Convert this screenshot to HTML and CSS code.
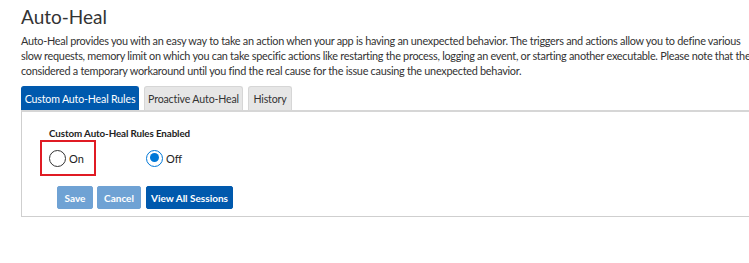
FILE: index.html
```html
<!DOCTYPE html>
<html>
<head>
<meta charset="utf-8">
<link rel="stylesheet" href="styles.css">
</head>
<body>
<div class="page">
  <h1 class="title">Auto-Heal</h1>
  <p class="desc">
    <span class="line">Auto-Heal provides you with an easy way to take an action when your app is having an unexpected behavior. The triggers and actions allow you to define various</span>
    <span class="line">slow requests, memory limit on which you can take specific actions like restarting the process, logging an event, or starting another executable. Please note that the</span>
    <span class="line">considered a temporary workaround until you find the real cause for the issue causing the unexpected behavior.</span>
  </p>
  <div class="tabs">
    <div class="tab active tab-custom">Custom Auto-Heal Rules</div>
    <div class="tab tab-proactive">Proactive Auto-Heal</div>
    <div class="tab tab-history">History</div>
  </div>
  <div class="panel">
    <div class="label">Custom Auto-Heal Rules Enabled</div>
    <div class="radios">
      <div class="radio highlight"><span class="circle"></span><span>On</span></div>
      <div class="radio"><span class="circle checked"></span><span>Off</span></div>
    </div>
    <div class="buttons">
      <button class="btn disabled btn-save">Save</button>
      <button class="btn disabled btn-cancel">Cancel</button>
      <button class="btn primary btn-sessions">View All Sessions</button>
    </div>
  </div>
</div>
</body>
</html>
```
FILE: styles.css
```css
html, body {
  margin: 0;
  padding: 0;
  background: #fff;
  overflow: hidden;
}
body {
  width: 749px;
  height: 263px;
  font-family: Lato, "Open Sans", sans-serif;
  color: #333;
}
.page {
  padding-left: 21px;
}
.title {
  margin: 0;
  padding-top: 4px;
  font-size: 19px;
  font-weight: 400;
  line-height: 26px;
  color: #333;
}
.desc {
  margin: 3px 0 0 0;
  font-size: 10.9px;
  letter-spacing: -0.28px;
  line-height: 15px;
  color: #333;
}
.line {
  display: block;
  white-space: nowrap;
}
.tabs {
  display: flex;
  gap: 5px;
  margin-top: 8px;
  height: 24px;
}
.tab {
  box-sizing: border-box;
  height: 24px;
  text-align: center;
  font-size: 10.6px;
  letter-spacing: -0.15px;
  line-height: 24px;
  background: #e6e6e6;
  border: 1px solid #d6d6d6;
  border-bottom: none;
  border-radius: 3px 3px 0 0;
  color: #333;
}
.tab-custom { width: 118px; }
.tab-proactive { width: 99px; }
.tab-history { width: 44px; }
.tab.active {
  background: #0059ad;
  border-color: #0059ad;
  color: #fff;
}
.panel {
  box-sizing: border-box;
  width: 800px;
  height: 107px;
  border: 1px solid #cfcfcf;
  border-top: 2px solid #d6d6d6;
  padding: 14px 0 0 27px;
}
.label {
  font-size: 9.8px;
  letter-spacing: -0.1px;
  font-weight: 700;
  line-height: 14px;
  color: #222;
}
.radios {
  display: flex;
  margin-left: -9px;
}
.radio {
  box-sizing: border-box;
  display: flex;
  align-items: center;
  gap: 3px;
  height: 36px;
  width: 56px;
  padding-left: 7px;
  font-size: 11px;
  color: #222;
  border: 2px solid transparent;
}
.radio.highlight {
  border-color: #e01b24;
  margin-right: 41px;
}
.circle {
  box-sizing: border-box;
  width: 17px;
  height: 17px;
  border-radius: 50%;
  border: 1px solid #333;
  background: #fff;
  position: relative;
  flex: none;
}
.circle.checked {
  border: 1.5px solid #0078d7;
}
.circle.checked::after {
  content: "";
  position: absolute;
  left: 2.5px;
  top: 2.5px;
  width: 9px;
  height: 9px;
  border-radius: 50%;
  background: #0078d7;
}
.buttons {
  display: flex;
  gap: 4px;
  margin-top: 10px;
  margin-left: 8px;
}
.btn {
  box-sizing: border-box;
  height: 23px;
  padding: 0;
  font-family: inherit;
  font-size: 10px;
  font-weight: 700;
  color: #fff;
  background: #0059ad;
  border: 1px solid #0059ad;
  border-radius: 2px;
}
.btn-save { width: 36px; }
.btn-cancel { width: 44px; }
.btn-sessions { width: 87px; margin-left: 1px; }
.btn.disabled {
  background: #6fa2d4;
  border-color: #6fa2d4;
}
```
